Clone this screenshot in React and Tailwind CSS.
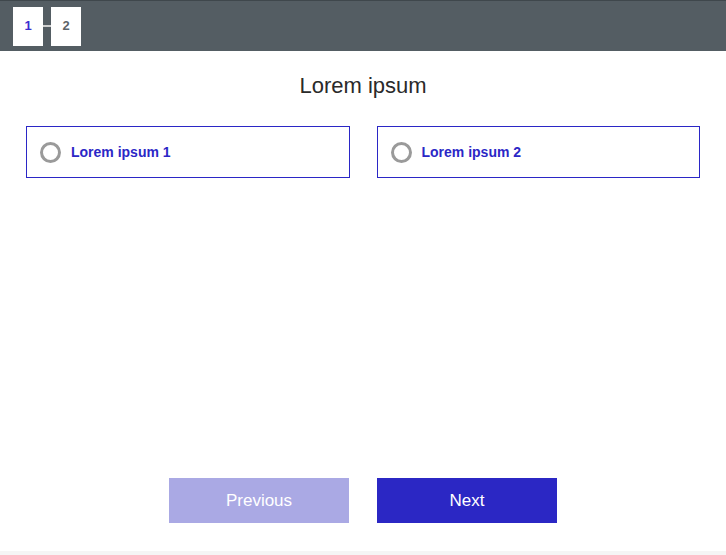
import React, { useState } from 'react';

// Two-step wizard: step header, choice cards, nav buttons
const OPTIONS = ['Lorem ipsum 1', 'Lorem ipsum 2'];

export default function App() {
  const [selected, setSelected] = useState(null);

  return (
    <div className="flex flex-col h-[555px] bg-white" style={{ fontFamily: '"Liberation Sans", Arial, sans-serif' }}>
      {/* Step bar */}
      <div className="h-[51px] bg-[#545d63] border-t border-[#3f474c] flex items-center pl-[13px] shrink-0">
        <div className="w-[30px] h-[39px] bg-white flex items-center justify-center text-[13px] font-bold text-[#3b2fd0]">1</div>
        <div className="w-[8px] h-[2px] bg-[#d0d0d0]" />
        <div className="w-[30px] h-[39px] bg-white flex items-center justify-center text-[13px] font-bold text-[#5e6468]">2</div>
      </div>

      {/* Question */}
      <div className="flex-1 flex flex-col">
        <h1 className="text-center text-[22px] text-[#2a2a2a] mt-[22px] leading-[26px]">Lorem ipsum</h1>

        <div className="grid grid-cols-2 gap-[27px] px-[26px] mt-[27px]">
          {OPTIONS.map((label, i) => (
            <button
              key={label}
              onClick={() => setSelected(i)}
              className="h-[52px] border border-[#2b27c6] flex items-center pl-[13px] gap-[10px] text-left bg-white"
            >
              <span className={`w-[21px] h-[21px] rounded-full border-[3px] ${selected === i ? 'border-[#2b27c6]' : 'border-[#9a9a9a]'}`} />
              <span className="text-[14px] font-bold text-[#2b27c6]">{label}</span>
            </button>
          ))}
        </div>

        <div className="flex-1" />

        {/* Navigation */}
        <div className="flex justify-center gap-[28px] mb-[28px]">
          <button className="w-[180px] h-[45px] bg-[#aaa9e4] text-white text-[17px]">Previous</button>
          <button className="w-[180px] h-[45px] bg-[#2b27c4] text-white text-[17px]">Next</button>
        </div>
      </div>

      <div className="h-[4px] bg-[#f5f5f5] shrink-0" />
    </div>
  );
}
